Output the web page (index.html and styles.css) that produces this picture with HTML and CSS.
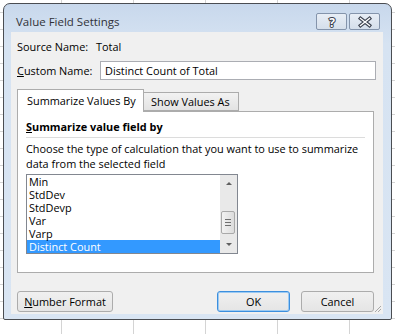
FILE: index.html
```html
<!DOCTYPE html>
<html>

<head>
  <meta charset="UTF-8">
  <meta name="viewport" content="width=device-width, initial-scale=1.0">
  <title>Value Field Settings</title>
  <link rel="stylesheet" href="styles.css">
</head>

<body>
  <div class="window">
    <div class="titlebar">
      <span class="title">Value Field Settings</span>
      <div class="caption-buttons">
        <button class="cap-btn">
          <svg class="cap-icon" width="14" height="15" viewBox="0 0 14 15">
            <text x="7" y="12.5" text-anchor="middle" class="help-glyph">?</text>
          </svg>
        </button>
        <button class="cap-btn">
          <svg class="cap-icon" width="14" height="10" viewBox="0 0 14 10">
            <path d="M2.5 1.5 L11.5 8.5 M11.5 1.5 L2.5 8.5" stroke="#3d4350" stroke-width="3.6" stroke-linecap="square" />
            <path d="M2.5 1.5 L11.5 8.5 M11.5 1.5 L2.5 8.5" stroke="#fff" stroke-width="1.4" stroke-linecap="square" />
          </svg>
        </button>
      </div>
    </div>
    <div class="frame-body">
      <div class="client">
        <div class="source-row">
          <span class="src-label">Source Name:</span>
          <span>Total</span>
        </div>
        <div class="custom-row">
          <label class="custom-label"><u>C</u>ustom Name:</label>
          <div class="textbox">Distinct Count of Total</div>
        </div>
        <div class="tabs">
          <div class="tab active">Summarize Values By</div>
          <div class="tab">Show Values As</div>
        </div>
        <div class="panel">
          <div class="group-title"><u>S</u>ummarize value field by</div>
          <div class="sep"></div>
          <p class="desc">Choose the type of calculation that you want to use to summarize<br>data from the selected field</p>
          <div class="listbox">
            <ul class="items">
              <li>Min</li>
              <li>StdDev</li>
              <li>StdDevp</li>
              <li>Var</li>
              <li>Varp</li>
              <li class="selected">Distinct Count</li>
            </ul>
            <div class="scrollbar">
              <div class="arrow"><span class="tri up"></span></div>
              <div class="track">
                <div class="thumb">
                  <span class="grip-line"></span>
                  <span class="grip-line"></span>
                  <span class="grip-line"></span>
                </div>
              </div>
              <div class="arrow"><span class="tri down"></span></div>
            </div>
          </div>
        </div>
        <div class="footer">
          <button class="btn wide"><u>N</u>umber Format</button>
          <button class="btn default">OK</button>
          <button class="btn">Cancel</button>
        </div>
        <svg class="size-grip" width="8" height="8" viewBox="0 0 8 8">
          <path d="M7 1 L1 7 M7 4 L4 7" stroke="#a8a8a8" stroke-width="1" />
        </svg>
      </div>
    </div>
  </div>
</body>

</html>
```

FILE: styles.css
```css
body {
  margin: 0;
  width: 395px;
  height: 334px;
  overflow: hidden;
  font-family: "Open Sans", "Liberation Sans", sans-serif;
  font-size: 10.9px;
  color: #000;
  background-color: #fff;
  background-image:
    linear-gradient(to right, #d4d4d4 1px, transparent 1px),
    linear-gradient(to bottom, #d4d4d4 1px, transparent 1px);
  background-size: 72px 17px;
  background-position: 61px 12px;
}

.window {
  box-sizing: border-box;
  width: 389px;
  height: 317px;
  margin: 3px 0 0 3px;
  border: 1px solid #4a4d52;
  border-radius: 7px 7px 2px 2px;
  background: linear-gradient(#c8d8ec, #d6e3f2 40px, #d9e5f3);
  display: flex;
  flex-direction: column;
}

.titlebar {
  height: 28px;
  display: flex;
  padding: 0 11px 0 12px;
}

.title {
  margin-top: 10px;
  line-height: 16px;
  font-size: 11.5px;
  color: #303238;
  flex: 1;
}

.caption-buttons {
  display: flex;
  gap: 2px;
  margin-top: 9px;
}

.cap-btn {
  width: 31px;
  height: 17px;
  padding: 0;
  border: 1px solid #8494ab;
  border-radius: 2px;
  background: linear-gradient(#e8eef6, #d5dfeb);
  display: flex;
  align-items: center;
  justify-content: center;
  overflow: visible;
}

.cap-icon {
  overflow: visible;
}

.help-glyph {
  font-family: "Open Sans", sans-serif;
  font-weight: bold;
  font-size: 12px;
  fill: #fff;
  stroke: #3d4350;
  stroke-width: 2px;
  paint-order: stroke;
}

.frame-body {
  flex: 1;
  padding: 0 8px 5px 7px;
  display: flex;
}

.client {
  flex: 1;
  position: relative;
  background: #f0f0f0;
  padding: 7px 9px 0 6px;
  display: flex;
  flex-direction: column;
}

.source-row {
  height: 15px;
  line-height: 15px;
  display: flex;
}

.src-label {
  width: 79px;
}

.custom-row {
  margin-top: 7px;
  height: 19px;
  display: flex;
  align-items: center;
}

.custom-label {
  width: 83px;
}

.textbox {
  flex: 1;
  box-sizing: border-box;
  height: 19px;
  margin-right: -2px;
  border: 1px solid #abadb3;
  background: #fff;
  padding-left: 4px;
  line-height: 17px;
}

.tabs {
  margin-top: 9px;
  height: 23px;
  margin-bottom: -1px;
  display: flex;
  position: relative;
  z-index: 1;
}

.tab {
  box-sizing: border-box;
  height: 19px;
  width: 95px;
  margin-top: 3px;
  padding-left: 7px;
  line-height: 18px;
  border: 1px solid #acacac;
  border-left: none;
  background: linear-gradient(#f2f2f2, #e3e3e3);
}

.tab.active {
  width: 127px;
  height: 23px;
  margin-top: 0;
  padding-left: 9px;
  line-height: 22px;
  border-left: 1px solid #acacac;
  border-bottom: none;
  background: #fff;
}

.panel {
  box-sizing: border-box;
  height: 162px;
  border: 1px solid #acacac;
  background: #fff;
  padding: 8px 8px 0 8px;
}

.group-title {
  font-weight: bold;
  line-height: 14px;
}

.sep {
  margin-top: 3px;
  height: 1px;
  background: #dcdcdc;
}

.desc {
  margin: 3px 0 0;
  line-height: 15px;
}

.listbox {
  box-sizing: border-box;
  margin-top: 3px;
  width: 212px;
  height: 80px;
  border: 1px solid #828790;
  display: flex;
}

.items {
  list-style: none;
  margin: 0;
  padding: 0;
  flex: 1;
}

.items li {
  height: 13px;
  line-height: 13px;
  padding-left: 2px;
}

.items li.selected {
  background: #3399ff;
  color: #fff;
}

.scrollbar {
  width: 17px;
  background: #e9e9e9;
  display: flex;
  flex-direction: column;
}

.arrow {
  height: 17px;
  display: flex;
  align-items: center;
  justify-content: center;
}

.tri {
  width: 0;
  height: 0;
  border-left: 3px solid transparent;
  border-right: 3px solid transparent;
}

.tri.up {
  border-bottom: 3px solid #606060;
}

.tri.down {
  border-top: 3px solid #606060;
}

.track {
  flex: 1;
  padding-top: 19px;
}

.thumb {
  box-sizing: border-box;
  width: 14px;
  height: 23px;
  margin-left: 1px;
  border: 1px solid #a9a9a9;
  border-radius: 2px;
  background: linear-gradient(to right, #f2f2f2, #dcdcdc);
  display: flex;
  flex-direction: column;
  align-items: center;
  justify-content: center;
  gap: 2px;
}

.grip-line {
  width: 6px;
  height: 1px;
  background: #6f6f6f;
}

.footer {
  margin-top: 18px;
  height: 21px;
  display: flex;
}

.btn {
  box-sizing: border-box;
  width: 73px;
  height: 21px;
  padding: 0;
  font-family: inherit;
  font-size: inherit;
  color: #000;
  border: 1px solid #acacac;
  border-radius: 3px;
  background: linear-gradient(#f0f0f0, #e5e5e5);
}

.btn.wide {
  width: 96px;
  margin-right: auto;
}

.btn.default {
  border-color: #3c8fde;
  box-shadow: inset 0 0 0 1px #9ccaf2;
  margin-right: 11px;
}

.size-grip {
  position: absolute;
  right: 1px;
  bottom: 1px;
}
```
